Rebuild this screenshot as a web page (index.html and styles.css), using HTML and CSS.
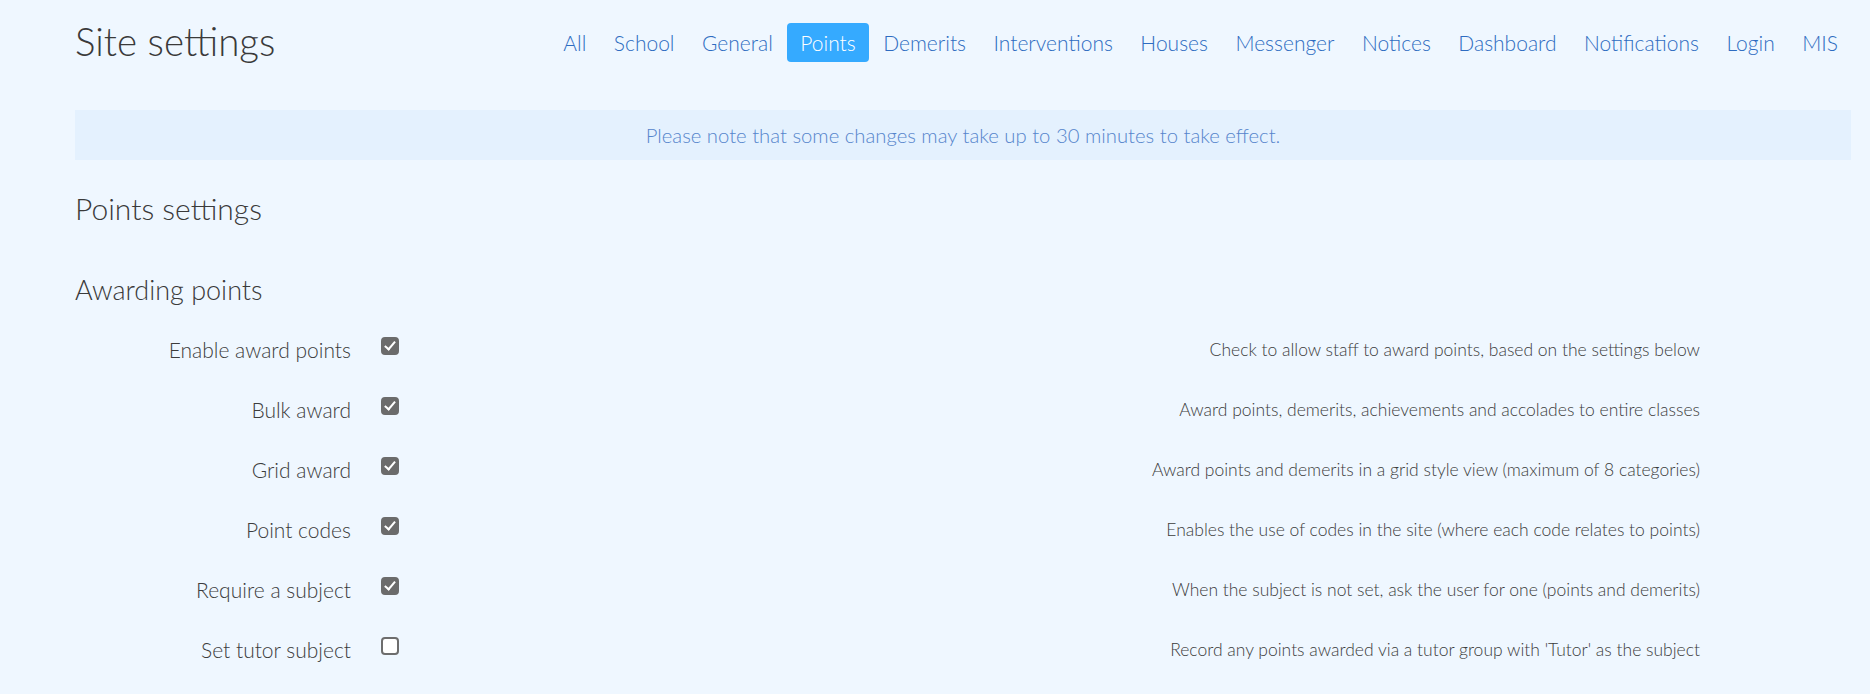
FILE: index.html
```html
<!DOCTYPE html>
<html lang="en">
<head>
    <meta charset="UTF-8">
    <title>Site settings</title>
    <link rel="stylesheet" href="styles.css">
</head>
<body>
    <div class="page">
        <div class="header">
            <h1 class="title">Site settings</h1>
            <ul class="nav">
                <li><a href="#">All</a></li>
                <li><a href="#">School</a></li>
                <li><a href="#">General</a></li>
                <li class="active"><a href="#">Points</a></li>
                <li><a href="#">Demerits</a></li>
                <li><a href="#">Interventions</a></li>
                <li><a href="#">Houses</a></li>
                <li><a href="#">Messenger</a></li>
                <li><a href="#">Notices</a></li>
                <li><a href="#">Dashboard</a></li>
                <li><a href="#">Notifications</a></li>
                <li><a href="#">Login</a></li>
                <li><a href="#">MIS</a></li>
            </ul>
        </div>

        <div class="notice">Please note that some changes may take up to 30 minutes to take effect.</div>

        <h2 class="section-title">Points settings</h2>
        <h3 class="group-title">Awarding points</h3>

        <div class="settings">
            <div class="row">
                <label class="label">Enable award points</label>
                <span class="check on"></span>
                <span class="desc">Check to allow staff to award points, based on the settings below</span>
            </div>
            <div class="row">
                <label class="label">Bulk award</label>
                <span class="check on"></span>
                <span class="desc">Award points, demerits, achievements and accolades to entire classes</span>
            </div>
            <div class="row">
                <label class="label">Grid award</label>
                <span class="check on"></span>
                <span class="desc">Award points and demerits in a grid style view (maximum of 8 categories)</span>
            </div>
            <div class="row">
                <label class="label">Point codes</label>
                <span class="check on"></span>
                <span class="desc">Enables the use of codes in the site (where each code relates to points)</span>
            </div>
            <div class="row">
                <label class="label">Require a subject</label>
                <span class="check on"></span>
                <span class="desc">When the subject is not set, ask the user for one (points and demerits)</span>
            </div>
            <div class="row">
                <label class="label">Set tutor subject</label>
                <span class="check"></span>
                <span class="desc">Record any points awarded via a tutor group with 'Tutor' as the subject</span>
            </div>
        </div>
    </div>
</body>
</html>
```

FILE: styles.css
```css
body {
    margin: 0;
    font-family: Lato, "Open Sans", sans-serif;
    font-weight: 300;
    background-color: #eff7ff;
    color: #444444;
}
.page {
    padding: 0 19px 0 75px;
}
.header {
    display: flex;
    justify-content: space-between;
    align-items: center;
    height: 84px;
}
.title {
    margin: 0 0 3px 0;
    font-size: 38.5px;
    font-weight: 300;
    color: #3a3a3a;
    line-height: 48px;
}
.nav {
    display: flex;
    list-style: none;
    margin: 0;
    padding: 0;
    gap: 1.5px;
}
.nav a {
    display: block;
    padding: 0 13px;
    line-height: 39px;
    font-size: 21px;
    color: #2e6cc1;
    text-decoration: none;
    border-radius: 4px;
}
.nav li.active a {
    background-color: #35aaff;
    color: white;
}
.notice {
    margin-top: 26px;
    height: 50px;
    line-height: 50px;
    text-align: center;
    background-color: #e4f1fe;
    color: #5685cc;
    font-size: 20.3px;
}
.section-title {
    margin: 29.5px 0 0 0;
    font-size: 30px;
    font-weight: 300;
    line-height: 36px;
    color: #3a3a3a;
}
.group-title {
    margin: 48.5px 0 0 0;
    font-size: 27px;
    font-weight: 300;
    line-height: 32px;
    color: #3a3a3a;
}
.settings {
    margin-top: 13px;
}
.row {
    display: grid;
    grid-template-columns: 276px 40px 1fr;
    align-items: center;
    column-gap: 30px;
    height: 60px;
    padding-right: 151px;
}
.label {
    text-align: right;
    font-size: 21px;
    color: #3c3c3c;
}
.check {
    width: 14px;
    height: 14px;
    border: 2px solid #6d6d6d;
    border-radius: 4px;
    background: white;
    position: relative;
    margin-top: -6px;
}
.check.on {
    background: #6b6b6b;
    border-color: #6b6b6b;
}
.check.on::after {
    content: "";
    position: absolute;
    left: 4px;
    top: 0;
    width: 4px;
    height: 9px;
    border: solid white;
    border-width: 0 2.5px 2.5px 0;
    transform: rotate(40deg);
}
.desc {
    text-align: right;
    font-size: 17.5px;
    color: #3c3c3c;
}
```
